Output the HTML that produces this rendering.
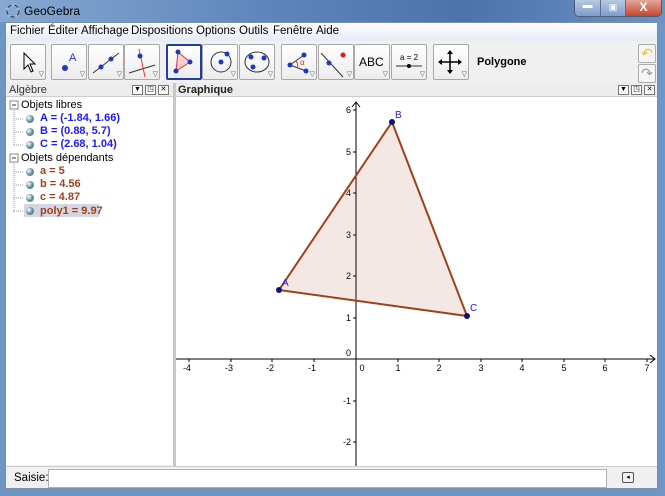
<!DOCTYPE html>
<html><head><meta charset="utf-8"><style>
*{margin:0;padding:0;box-sizing:border-box}
body{width:665px;height:496px;overflow:hidden;font-family:"Liberation Sans",sans-serif;font-size:11px;background:#6f95c4;position:relative}
.abs{position:absolute}
.title{left:0;top:0;width:665px;height:22px;background:linear-gradient(90deg,#86a8d2,#5e86bb 40%,#4c74aa 70%,#6a92c4)}
.win{left:5px;top:22px;width:653px;height:467px;background:#f0f0f0;border:1px solid #7a8fa8}
.menu{left:6px;top:23px;width:651px;height:18px;background:linear-gradient(#fdfdfe,#e6ecf5);font-size:11.5px;color:#000}
.menu span{position:absolute;top:2px}
.tb{top:44px;width:36px;height:36px;border:1px solid #a8a8a8;border-radius:2px;background:linear-gradient(#fff,#ececec)}
.tri{position:absolute;right:1px;bottom:1px;font-size:7px;color:#555;line-height:7px}
.hdr{height:14px;background:#ececec;border-bottom:1px solid #ccc;font-size:11px;color:#222}
.btn{width:11px;height:10px;border:1px solid #777;background:#fafafa;top:2px;font-size:7px;line-height:8px;text-align:center}
</style></head><body>
<div class="abs title"></div>
<svg class="abs" style="left:5px;top:3px" width="16" height="16"><circle cx="8" cy="8" r="6" fill="none" stroke="#333" stroke-width="1"/><circle cx="8" cy="2" r="1.5" fill="#9bd"/><circle cx="13" cy="6" r="1.5" fill="#9bd"/><circle cx="11" cy="13" r="1.5" fill="#9bd"/><circle cx="4" cy="13" r="1.5" fill="#9bd"/><circle cx="2.5" cy="6" r="1.5" fill="#9bd"/></svg>
<div class="abs" style="left:24px;top:4px;font-size:12px;color:#000">GeoGebra</div>
<div class="abs" style="left:574px;top:0;width:88px;height:17px;border:1px solid #4b5e78;border-top:none;border-radius:0 0 5px 5px;overflow:hidden;display:flex">
<div style="width:26px;background:linear-gradient(#b7c9e2,#7e9ccb);border-right:1px solid #5c6e88;color:#fff;text-align:center;font-size:10px">▬</div>
<div style="width:25px;background:linear-gradient(#b7c9e2,#7e9ccb);border-right:1px solid #5c6e88;color:#fff;text-align:center;font-size:9px;line-height:15px">▣</div>
<div style="flex:1;background:linear-gradient(#e3a79a,#c5452d);color:#fff;text-align:center;font-weight:bold;font-size:12px;line-height:15px">X</div></div>
<div class="abs win"></div>
<div class="abs menu">
<span style="left:4px">Fichier</span><span style="left:42px">Éditer</span><span style="left:75px">Affichage</span><span style="left:125px">Dispositions</span><span style="left:190px">Options</span><span style="left:233px">Outils</span><span style="left:267px">Fenêtre</span><span style="left:310px">Aide</span></div>
<!-- toolbar -->
<div class="abs tb" style="left:10px"><svg width="34" height="34"><path d="M13 8 L13 24 L17 20 L20 27 L22 26 L19 19 L24 19 Z" fill="#fff" stroke="#000"/></svg><span class="tri">▽</span></div>
<div class="abs tb" style="left:51px"><svg width="34" height="34"><circle cx="13" cy="23" r="3" fill="#1f36c4"/><text x="17" y="16" font-size="11" fill="#2030e0" font-family="Liberation Sans">A</text></svg><span class="tri">▽</span></div>
<div class="abs tb" style="left:88px"><svg width="34" height="34"><line x1="4" y1="28" x2="30" y2="8" stroke="#333"/><circle cx="12" cy="22" r="2.5" fill="#1f36c4"/><circle cx="22" cy="14" r="2.5" fill="#1f36c4"/></svg><span class="tri">▽</span></div>
<div class="abs tb" style="left:124px"><svg width="34" height="34"><line x1="4" y1="28" x2="30" y2="20" stroke="#333"/><line x1="14" y1="4" x2="20" y2="32" stroke="#e33"/><circle cx="15" cy="11" r="2.5" fill="#1f36c4"/></svg><span class="tri">▽</span></div>
<div class="abs tb" style="left:166px;border:2px solid #1f3fa0"><svg width="32" height="32"><polygon points="10,6 22,16 8,25" fill="#f8d0d0" stroke="#d33"/><circle cx="10" cy="6" r="2.5" fill="#1f36c4"/><circle cx="22" cy="16" r="2.5" fill="#1f36c4"/><circle cx="8" cy="25" r="2.5" fill="#1f36c4"/></svg></div>
<div class="abs tb" style="left:202px"><svg width="34" height="34"><circle cx="18" cy="17" r="10" fill="none" stroke="#333"/><circle cx="18" cy="17" r="2.5" fill="#1f36c4"/><circle cx="24" cy="9" r="2.5" fill="#1f36c4"/></svg><span class="tri">▽</span></div>
<div class="abs tb" style="left:239px"><svg width="34" height="34"><ellipse cx="17" cy="17" rx="12" ry="10" fill="none" stroke="#333"/><circle cx="11" cy="12" r="2.5" fill="#1f36c4"/><circle cx="13" cy="22" r="2.5" fill="#1f36c4"/><circle cx="24" cy="13" r="2.5" fill="#1f36c4"/></svg><span class="tri">▽</span></div>
<div class="abs tb" style="left:281px"><svg width="34" height="34"><path d="M8 20 L22 10 M8 20 L24 26" stroke="#333" fill="none"/><path d="M14 16 Q17 20 15 23" stroke="#d33" fill="none"/><text x="18" y="20" font-size="8" fill="#d33">α</text><circle cx="8" cy="20" r="2.5" fill="#1f36c4"/><circle cx="22" cy="10" r="2.5" fill="#1f36c4"/><circle cx="24" cy="26" r="2.5" fill="#1f36c4"/></svg><span class="tri">▽</span></div>
<div class="abs tb" style="left:318px"><svg width="34" height="34"><line x1="2" y1="8" x2="24" y2="32" stroke="#333"/><circle cx="24" cy="10" r="2.5" fill="#e11"/><circle cx="10" cy="18" r="2.5" fill="#1f36c4"/></svg><span class="tri">▽</span></div>
<div class="abs tb" style="left:354px"><div style="position:absolute;left:4px;top:10px;font-size:12px">ABC</div><span class="tri">▽</span></div>
<div class="abs tb" style="left:391px"><svg width="34" height="34"><text x="8" y="15" font-size="8" font-family="Liberation Sans">a = 2</text><line x1="4" y1="21" x2="30" y2="21" stroke="#333"/><circle cx="17" cy="21" r="2" fill="#000"/></svg><span class="tri">▽</span></div>
<div class="abs tb" style="left:433px"><svg width="34" height="34"><path d="M16 7 V27 M6 17 H26" stroke="#000" stroke-width="1.5"/><path d="M16 5 L13 9 H19Z M16 29 L13 25 H19Z M4 17 L8 14 V20Z M28 17 L24 14 V20Z" fill="#000"/></svg><span class="tri">▽</span></div>
<div class="abs" style="left:477px;top:56px;font-weight:bold;font-size:11px">Polygone</div>
<div class="abs" style="left:638px;top:44px;width:18px;height:19px;border:1px solid #aaa;border-radius:2px;background:#f6f6f6;color:#e8c020;font-size:14px;text-align:center;line-height:17px">↶</div>
<div class="abs" style="left:638px;top:64px;width:18px;height:19px;border:1px solid #aaa;border-radius:2px;background:#f6f6f6;color:#999;font-size:14px;text-align:center;line-height:17px">↷</div>
<!-- algebra -->
<div class="abs" style="left:6px;top:83px;width:167px;height:382px;background:#fff"></div>
<div class="abs hdr" style="left:6px;top:83px;width:167px"><span style="position:absolute;left:3px;top:1px;color:#333">Algèbre</span></div>
<div class="abs btn" style="left:132px;top:85px">▼</div><div class="abs btn" style="left:145px;top:85px">◳</div><div class="abs btn" style="left:158px;top:85px">✕</div>
<div class="abs" style="left:173px;top:83px;width:3px;height:383px;background:#c8c8c8"></div>
<!-- graphique -->
<div class="abs" style="left:176px;top:83px;width:481px;height:383px;background:#fff"></div>
<div class="abs hdr" style="left:176px;top:83px;width:481px"><span style="position:absolute;left:2px;top:1px;font-weight:bold;color:#222">Graphique</span></div>
<div class="abs btn" style="left:618px;top:85px">▼</div><div class="abs btn" style="left:631px;top:85px">◳</div><div class="abs btn" style="left:644px;top:85px">✕</div>
<!-- tree -->
<div class="abs" style="left:8px;top:98px;width:160px;font-size:11px;line-height:13.3px">
<svg class="abs" style="left:0;top:0" width="160" height="120"><g stroke="#999" stroke-dasharray="1,1"><line x1="6" y1="10" x2="6" y2="48"/><line x1="6" y1="21" x2="16" y2="21"/><line x1="6" y1="34" x2="16" y2="34"/><line x1="6" y1="47" x2="16" y2="47"/><line x1="6" y1="63" x2="6" y2="114"/><line x1="6" y1="74" x2="16" y2="74"/><line x1="6" y1="87" x2="16" y2="87"/><line x1="6" y1="100" x2="16" y2="100"/><line x1="6" y1="113" x2="16" y2="113"/></g>
<rect x="2" y="3" width="8" height="8" fill="#fff" stroke="#888"/><line x1="4" y1="7" x2="8" y2="7" stroke="#333"/>
<rect x="2" y="56" width="8" height="8" fill="#fff" stroke="#888"/><line x1="4" y1="60" x2="8" y2="60" stroke="#333"/>
<defs><radialGradient id="g" cx="35%" cy="35%"><stop offset="0" stop-color="#fff"/><stop offset="1" stop-color="#5a8a96"/></radialGradient></defs>
<g fill="url(#g)"><circle cx="22" cy="21" r="4"/><circle cx="22" cy="34" r="4"/><circle cx="22" cy="47" r="4"/><circle cx="22" cy="74" r="4"/><circle cx="22" cy="87" r="4"/><circle cx="22" cy="100" r="4"/></g>
<rect x="16" y="106" width="75" height="13" fill="#d6d6e2"/><circle cx="22" cy="113" r="4" fill="url(#g)"/></svg>
<div class="abs" style="left:13px;top:1px">Objets libres</div>
<div class="abs" style="left:32px;top:14px;color:#1a1aff;font-weight:bold">A = (-1.84, 1.66)</div>
<div class="abs" style="left:32px;top:27px;color:#1a1aff;font-weight:bold">B = (0.88, 5.7)</div>
<div class="abs" style="left:32px;top:40px;color:#1a1aff;font-weight:bold">C = (2.68, 1.04)</div>
<div class="abs" style="left:13px;top:54px">Objets dépendants</div>
<div class="abs" style="left:32px;top:67px;color:#a0401a;font-weight:bold">a = 5</div>
<div class="abs" style="left:32px;top:80px;color:#a0401a;font-weight:bold">b = 4.56</div>
<div class="abs" style="left:32px;top:93px;color:#a0401a;font-weight:bold">c = 4.87</div>
<div class="abs" style="left:32px;top:107px;color:#a0401a;font-weight:bold">poly1 = 9.97</div>
</div>
<!-- graph -->
<svg class="abs" style="left:176px;top:97px" width="481" height="369" font-family="Liberation Sans" font-size="9">
<g transform="translate(-176,-97)">
<line x1="176" y1="359" x2="655" y2="359" stroke="#000"/><path d="M650 355 L655 359 L650 363" fill="none" stroke="#000"/>
<line x1="356" y1="466" x2="356" y2="102" stroke="#000"/><path d="M352 107 L356 102 L360 107" fill="none" stroke="#000"/>
<g stroke="#000">
<line x1="189" y1="359" x2="189" y2="362"/><line x1="231" y1="359" x2="231" y2="362"/><line x1="272" y1="359" x2="272" y2="362"/><line x1="314" y1="359" x2="314" y2="362"/><line x1="398" y1="359" x2="398" y2="362"/><line x1="439" y1="359" x2="439" y2="362"/><line x1="481" y1="359" x2="481" y2="362"/><line x1="522" y1="359" x2="522" y2="362"/><line x1="564" y1="359" x2="564" y2="362"/><line x1="605" y1="359" x2="605" y2="362"/><line x1="647" y1="359" x2="647" y2="362"/>
<line x1="353" y1="442" x2="356" y2="442"/><line x1="353" y1="401" x2="356" y2="401"/><line x1="353" y1="318" x2="356" y2="318"/><line x1="353" y1="276" x2="356" y2="276"/><line x1="353" y1="235" x2="356" y2="235"/><line x1="353" y1="193" x2="356" y2="193"/><line x1="353" y1="152" x2="356" y2="152"/><line x1="353" y1="110" x2="356" y2="110"/></g>
<g text-anchor="middle"><text x="187" y="371">-4</text><text x="229" y="371">-3</text><text x="270" y="371">-2</text><text x="312" y="371">-1</text><text x="362" y="371">0</text><text x="398" y="371">1</text><text x="439" y="371">2</text><text x="481" y="371">3</text><text x="522" y="371">4</text><text x="564" y="371">5</text><text x="605" y="371">6</text><text x="647" y="371">7</text></g>
<g text-anchor="end"><text x="351" y="356">0</text><text x="351" y="445">-2</text><text x="351" y="404">-1</text><text x="351" y="321">1</text><text x="351" y="279">2</text><text x="351" y="238">3</text><text x="351" y="196">4</text><text x="351" y="155">5</text><text x="351" y="113">6</text></g>
<polygon points="279,290 392,122 467,316" fill="rgba(160,64,26,0.12)" stroke="#a0401a" stroke-width="2"/>
<circle cx="279" cy="290" r="3" fill="#10107a"/><circle cx="392" cy="122" r="3" fill="#10107a"/><circle cx="467" cy="316" r="3" fill="#10107a"/>
<g fill="#2020e0" font-size="10"><text x="282" y="286">A</text><text x="395" y="118">B</text><text x="470" y="311">C</text></g>
</g></svg>
<!-- input bar -->
<div class="abs" style="left:6px;top:466px;width:651px;height:22px;background:#f0f0f0;border-top:1px solid #ccc"></div>
<div class="abs" style="left:14px;top:472px;font-size:11.5px">Saisie:</div>
<div class="abs" style="left:48px;top:469px;width:559px;height:19px;background:#fff;border:1px solid #b0b0b0"></div>
<div class="abs" style="left:622px;top:472px;width:12px;height:11px;border:1px solid #555;border-radius:2px;font-size:7px;text-align:center;line-height:9px">◂</div>
</body></html>
